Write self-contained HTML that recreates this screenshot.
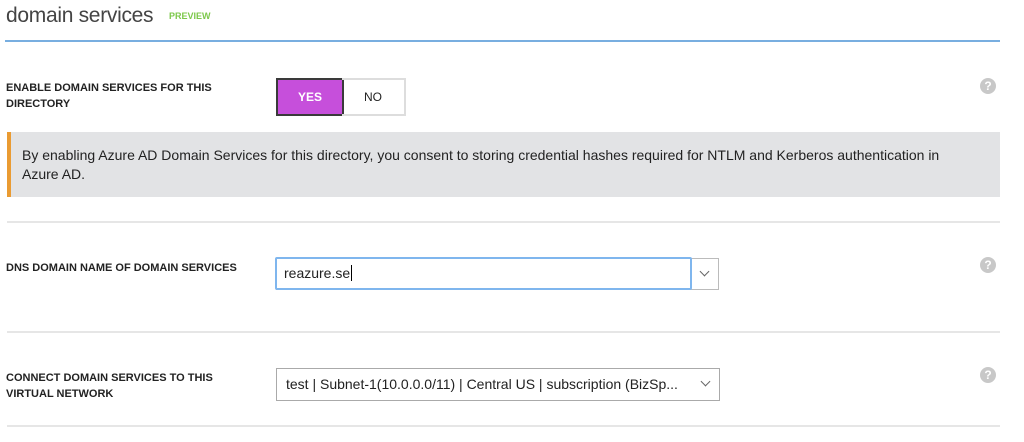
<!DOCTYPE html><html><head><style>
body{margin:0;width:1024px;height:442px;background:#fff;font-family:"Liberation Sans",sans-serif;position:relative;overflow:hidden;color:#222}
.a{position:absolute}
.lbl{font-size:11px;font-weight:bold;line-height:16px;color:#222}
.help{width:16px;height:16px;border-radius:50%;background:#c8c8c8;color:#fff;font-size:12px;font-weight:bold;text-align:center;line-height:16px}
.sep{height:2px;background:#e6e6e6;left:7px;width:993px}
.chev{position:absolute;right:10px;top:9px;width:6px;height:6px;border-right:1.5px solid #666;border-bottom:1.5px solid #666;transform:rotate(45deg)}
</style></head><body>
<div class="a" style="left:6px;top:4px;font-size:21px;color:#444;letter-spacing:-0.3px">domain services</div>
<div class="a" style="left:169px;top:11px;font-size:9px;font-weight:bold;color:#7cc84a">PREVIEW</div>
<div class="a" style="left:5px;top:40px;width:995px;height:2px;background:#78aee0"></div>
<div class="a lbl" style="left:6px;top:80px">ENABLE DOMAIN SERVICES FOR THIS<br>DIRECTORY</div>
<div class="a" style="left:276px;top:78px;width:64px;height:34px;background:#c64fdb;border:2px solid #3a3a3a;color:#fff;font-size:12px;font-weight:bold;text-align:center;line-height:34px">YES</div>
<div class="a" style="left:342px;top:78px;width:62px;height:34px;border:2px solid #ddd;border-left:none;font-size:12px;text-align:center;line-height:34px">NO</div>
<div class="a help" style="left:980px;top:78px">?</div>
<div class="a" style="left:7px;top:132px;width:993px;height:65px;background:#e2e3e5"></div>
<div class="a" style="left:7px;top:132px;width:4px;height:65px;background:#ea9b32"></div>
<div class="a" style="left:22px;top:146px;font-size:14px;line-height:19px;color:#222;width:955px">By enabling Azure AD Domain Services for this directory, you consent to storing credential hashes required for NTLM and Kerberos authentication in Azure AD.</div>
<div class="a sep" style="top:221px"></div>
<div class="a lbl" style="left:6px;top:260px">DNS DOMAIN NAME OF DOMAIN SERVICES</div>
<div class="a" style="left:276px;top:258px;width:443px;height:32px;border:1px solid #bbb;box-sizing:border-box"><div class="chev"></div></div>
<div class="a" style="left:275px;top:257px;width:417px;height:33px;border:2px solid #7fb6ee;box-sizing:border-box;border-radius:2px;background:#fff;font-size:14px;line-height:29px;padding-left:7px">reazure.se<span style="border-left:1px solid #000;margin-left:1px"></span></div>
<div class="a help" style="left:980px;top:257px">?</div>
<div class="a sep" style="top:331px"></div>
<div class="a lbl" style="left:6px;top:370px">CONNECT DOMAIN SERVICES TO THIS<br>VIRTUAL NETWORK</div>
<div class="a" style="left:276px;top:368px;width:444px;height:33px;border:1px solid #aaa;box-sizing:border-box;font-size:14px;line-height:31px;padding-left:9px">test | Subnet-1(10.0.0.0/11) | Central US | subscription (BizSp...<div class="chev"></div></div>
<div class="a help" style="left:980px;top:367px">?</div>
<div class="a sep" style="top:425px"></div>
</body></html>
